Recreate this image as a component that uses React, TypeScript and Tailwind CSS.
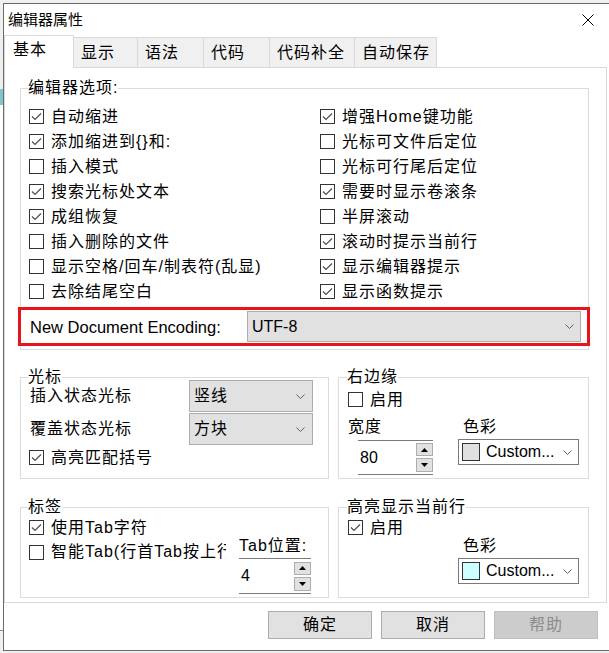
import React from 'react';

const leftOptions: [string, boolean][] = [
  ['自动缩进', true],
  ['添加缩进到{}和:', true],
  ['插入模式', false],
  ['搜索光标处文本', true],
  ['成组恢复', true],
  ['插入删除的文件', false],
  ['显示空格/回车/制表符(乱显)', false],
  ['去除结尾空白', false],
];

const rightOptions: [string, boolean][] = [
  ['增强Home键功能', true],
  ['光标可文件后定位', false],
  ['光标可行尾后定位', false],
  ['需要时显示卷滚条', true],
  ['半屏滚动', false],
  ['滚动时提示当前行', true],
  ['显示编辑器提示', true],
  ['显示函数提示', true],
];

const tabs = [
  { label: '基本', w: 'w-[70px] border-l' },
  { label: '显示', w: 'w-[64px]' },
  { label: '语法', w: 'w-[66px]' },
  { label: '代码', w: 'w-[66px]' },
  { label: '代码补全', w: 'w-[85px]' },
  { label: '自动保存', w: 'w-[82px]' },
];

const Check: React.FC<{ checked?: boolean }> = ({ checked }) => (
  <span className="flex h-[15px] w-[15px] shrink-0 items-center justify-center border border-[#333333] bg-white">
    {checked && (
      <svg width="13" height="13" viewBox="0 0 13 13">
        <polyline points="2,6.5 5,9.5 11,3.5" fill="none" stroke="#4d4d4d" strokeWidth="1.2" />
      </svg>
    )}
  </span>
);

const CheckRow: React.FC<{ checked?: boolean; label: string; className?: string }> = ({
  checked,
  label,
  className = 'h-[25px]',
}) => (
  <div className={`flex items-center whitespace-nowrap ${className}`}>
    <Check checked={checked} />
    <span className="ml-[7px] tracking-[1px] leading-[20px]">{label}</span>
  </div>
);

const Chevron = () => (
  <svg width="9" height="5" viewBox="0 0 9 5" className="shrink-0">
    <polyline points="0.5,0.5 4.5,4.5 8.5,0.5" fill="none" stroke="#606060" strokeWidth="1" />
  </svg>
);

const Spinner: React.FC<{ value: string; className: string }> = ({ value, className }) => (
  <div className={`flex items-center border-y border-[#7a7a7a] bg-white ${className}`}>
    <span className="flex-1 pl-[2px] leading-[20px]">{value}</span>
    <div className="flex flex-col gap-[2px]">
      <div className="flex h-[13px] w-[17px] items-center justify-center border border-[#adadad] bg-[#e1e1e1]">
        <svg width="7" height="4" viewBox="0 0 7 4">
          <polygon points="0,4 3.5,0 7,4" fill="#000" />
        </svg>
      </div>
      <div className="flex h-[14px] w-[17px] items-center justify-center border border-[#adadad] bg-[#e1e1e1]">
        <svg width="7" height="4" viewBox="0 0 7 4">
          <polygon points="0,0 7,0 3.5,4" fill="#000" />
        </svg>
      </div>
    </div>
  </div>
);

const ColorCombo: React.FC<{ swatch: string }> = ({ swatch }) => (
  <div className="flex h-[26px] w-[121px] items-center border border-[#7a7a7a] bg-white pr-[6px]">
    <span className={`ml-[3px] h-[18px] w-[18px] shrink-0 border border-[#333333] ${swatch}`} />
    <span className="ml-[6px] flex-1 leading-[20px]">Custom...</span>
    <Chevron />
  </div>
);

const Select: React.FC<{ value: string; className: string }> = ({ value, className }) => (
  <div className={`flex items-center justify-between border border-[#adadad] bg-[#e1e1e1] pl-[4px] pr-[7px] ${className}`}>
    <span className="tracking-[1px] leading-[20px]">{value}</span>
    <Chevron />
  </div>
);

export default function App() {
  return (
    <div className="flex h-[653px] w-[609px] overflow-hidden bg-[#f0f0f0] pt-[3px] font-[family-name:Liberation_Sans,Noto_Sans_CJK_SC,sans-serif] text-[16px] text-black">
      {/* desktop strip on the left */}
      <div className="flex w-[3px] flex-col">
        <div className="h-[86px]" />
        <div className="h-[16px] bg-[#7fc6c6]" />
        <div className="h-[525px] bg-white" />
        <div className="h-px bg-[#8a8a8a]" />
      </div>

      {/* window */}
      <div className="flex h-[648px] w-[606px] flex-col border-y border-l border-[#6a6a6a] bg-white">
        {/* title bar */}
        <div className="flex h-[31px] shrink-0 items-center justify-between pl-[4px] pr-[15px]">
          <span className="text-[15px] leading-[20px]">编辑器属性</span>
          <svg width="12" height="12" viewBox="0 0 12 12">
            <path d="M0.5 0.5 L11.5 11.5 M11.5 0.5 L0.5 11.5" stroke="#000" strokeWidth="1" />
          </svg>
        </div>

        {/* tabs */}
        <div className="flex h-[32px] shrink-0 items-end">
          {tabs.map((t, i) =>
            i === 0 ? (
              <div
                key={t.label}
                className={`relative z-10 -mb-px h-[33px] border-t border-r border-[#d9d9d9] bg-white pl-[8px] pt-[4px] tracking-[1px] leading-[20px] ${t.w}`}
              >
                {t.label}
              </div>
            ) : (
              <div
                key={t.label}
                className={`h-[30px] border-t border-r border-[#d9d9d9] bg-[#f0f0f0] pl-[7px] pt-[5px] tracking-[1px] leading-[20px] ${t.w}`}
              >
                {t.label}
              </div>
            )
          )}
        </div>

        {/* pane */}
        <div className="h-[536px] w-[603px] shrink-0 border border-[#d9d9d9] pl-[15px]">
          {/* editor options */}
          <fieldset className="mt-[10px] w-[569px] min-w-0 border border-[#dcdcdc] pb-[3px]">
            <legend className="ml-[7px] px-0 tracking-[1px] leading-[20px]">编辑器选项:</legend>
            <div className="grid grid-cols-[291px_1fr] pl-[8px] pt-[6px]">
              <div className="flex flex-col">
                {leftOptions.map(([label, checked]) => (
                  <CheckRow key={label} label={label} checked={checked} />
                ))}
              </div>
              <div className="flex flex-col">
                {rightOptions.map(([label, checked]) => (
                  <CheckRow key={label} label={label} checked={checked} />
                ))}
              </div>
            </div>
            <div className="-ml-[3px] -mr-[2px] mt-[3px] flex h-[39px] items-center border-[3px] border-[#e8141c] pl-[9px] pr-[6px]">
              <span className="w-[217px] shrink-0 text-[16.5px] leading-[20px]">New Document Encoding:</span>
              <div className="flex h-[31px] flex-1 items-center justify-between border border-[#adadad] bg-[#e1e1e1] pl-[4px] pr-[6px]">
                <span className="leading-[20px]">UTF-8</span>
                <Chevron />
              </div>
            </div>
          </fieldset>

          {/* cursor + right margin */}
          <div className="mt-[19px] flex gap-[9px]">
            <fieldset className="h-[110px] w-[309px] min-w-0 border border-[#dcdcdc]">
              <legend className="ml-[7px] px-0 tracking-[1px] leading-[16px]">光标</legend>
              <div className="-mt-[5px] flex h-[32px] items-center pl-[9px]">
                <span className="w-[159px] tracking-[1px] leading-[20px]">插入状态光标</span>
                <Select value="竖线" className="h-[32px] w-[124px]" />
              </div>
              <div className="mt-px flex h-[32px] items-center pl-[9px]">
                <span className="w-[159px] tracking-[1px] leading-[20px]">覆盖状态光标</span>
                <Select value="方块" className="h-[32px] w-[124px]" />
              </div>
              <div className="pl-[8px]">
                <CheckRow label="高亮匹配括号" checked />
              </div>
            </fieldset>

            <fieldset className="h-[110px] w-[251px] min-w-0 border border-[#dcdcdc]">
              <legend className="ml-[8px] px-0 tracking-[1px] leading-[16px]">右边缘</legend>
              <div className="mt-[2px] pl-[9px]">
                <CheckRow label="启用" />
              </div>
              <div className="mt-[5px] flex">
                <div className="w-[119px] pl-[9px]">
                  <div className="h-[20px] tracking-[1px] leading-[20px]">宽度</div>
                  <Spinner value="80" className="ml-[10px] mt-[3px] h-[35px] w-[75px]" />
                </div>
                <div>
                  <div className="h-[20px] pl-[5px] tracking-[1px] leading-[20px]">色彩</div>
                  <div className="mt-[2px]">
                    <ColorCombo swatch="bg-[#e0e0e0]" />
                  </div>
                </div>
              </div>
            </fieldset>
          </div>

          {/* tabs + highlight line */}
          <div className="mt-[20px] flex gap-[9px]">
            <fieldset className="h-[99px] w-[309px] min-w-0 border border-[#dcdcdc]">
              <legend className="ml-[7px] px-0 tracking-[1px] leading-[16px]">标签</legend>
              <div className="flex">
                <div className="w-[205px] shrink-0 overflow-hidden pl-[8px]">
                  <CheckRow label="使用Tab字符" checked />
                  <CheckRow label="智能Tab(行首Tab按上行对齐)" className="h-[24px]" />
                </div>
                <div className="ml-[13px]">
                  <div className="mt-[21px] h-[20px] whitespace-nowrap tracking-[1px] leading-[20px]">Tab位置:</div>
                  <Spinner value="4" className="mt-[2px] h-[36px] w-[72px]" />
                </div>
              </div>
            </fieldset>

            <fieldset className="h-[99px] w-[251px] min-w-0 border border-[#dcdcdc]">
              <legend className="ml-[8px] px-0 tracking-[1px] leading-[16px]">高亮显示当前行</legend>
              <div className="pl-[9px]">
                <CheckRow label="启用" checked />
              </div>
              <div className="-mt-[4px] ml-[119px]">
                <div className="h-[20px] pl-[5px] tracking-[1px] leading-[20px]">色彩</div>
                <div className="mt-[2px]">
                  <ColorCombo swatch="bg-[#ccffff]" />
                </div>
              </div>
            </fieldset>
          </div>
        </div>

        {/* buttons */}
        <div className="mt-[8px] flex gap-[9px] pl-[264px]">
          <button className="h-[28px] w-[104px] border border-[#adadad] bg-[#e1e1e1] tracking-[1px] leading-[20px]">确定</button>
          <button className="h-[28px] w-[104px] border border-[#adadad] bg-[#e1e1e1] tracking-[1px] leading-[20px]">取消</button>
          <button className="h-[28px] w-[104px] border border-[#bfbfbf] bg-[#cccccc] tracking-[1px] leading-[20px] text-[#8c8c8c]">帮助</button>
        </div>
      </div>
    </div>
  );
}
